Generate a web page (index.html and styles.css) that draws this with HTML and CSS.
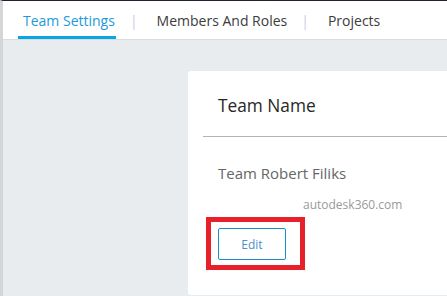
FILE: index.html
```html
<!DOCTYPE html>
<html lang="en">

<head>
    <meta charset="UTF-8">
    <meta name="viewport" content="width=device-width, initial-scale=1.0">
    <title>Team Settings</title>
    <link rel="stylesheet" href="styles.css">
</head>

<body>
    <div class="page">
        <!-- Tab bar -->
        <nav class="tabs">
            <a href="#" class="tab active">Team Settings</a>
            <span class="tab-sep">|</span>
            <a href="#" class="tab">Members And Roles</a>
            <span class="tab-sep">|</span>
            <a href="#" class="tab">Projects</a>
        </nav>

        <main class="content">
            <section class="card">
                <div class="card-head">
                    <h2 class="card-title">Team Name</h2>
                </div>
                <div class="card-body">
                    <p class="team-name">Team Robert Filiks</p>
                    <p class="watermark">autodesk360.com</p>
                    <div class="highlight">
                        <button class="btn-edit">Edit</button>
                    </div>
                </div>
            </section>
        </main>
    </div>
</body>

</html>
```

FILE: styles.css
```css
/* Base page */
body {
    margin: 0;
    padding: 0;
    font-family: "Open Sans", "Noto Sans", sans-serif;
    background: #e8ecef;
    overflow: hidden;
}

.page {
    height: 296px;
    border-left: 3px solid #d4d6d8;
    box-sizing: border-box;
    border-top: 1px solid #1f2330;
}

/* Tab bar */
.tabs {
    display: flex;
    align-items: flex-end;
    height: 38px;
    padding-left: 15px;
    background: #fff;
    border-bottom: 1px solid #d9dde1;
}

.tab {
    display: block;
    padding: 0 0 5px 5px;
    font-size: 14px;
    line-height: 20px;
    color: #3c3c3c;
    text-decoration: none;
    border-bottom: 3px solid transparent;
}

.tab.active {
    padding-right: 1px;
    color: #1c9ad8;
    border-bottom-color: #0aa5e2;
}

.tab-sep {
    padding: 0 14px 8px 14px;
    font-size: 14px;
    line-height: 20px;
    color: #cbcbe0;
}

/* Content */
.content {
    padding: 31px 0 0 185px;
}

.card {
    background: #fff;
    border-radius: 3px 0 0 3px;
    height: 224px;
    padding-left: 15px;
}

.card-head {
    border-bottom: 1px solid #b5b5b5;
    padding: 23px 0 18px 15px;
}

.card-title {
    margin: 0;
    font-size: 17.3px;
    font-weight: normal;
    line-height: 24px;
    color: #262626;
}

.card-body {
    padding: 26px 0 0 15px;
}

.team-name {
    margin: 0;
    font-size: 15px;
    line-height: 20px;
    color: #666;
}

.watermark {
    margin: 14px 0 0 85px;
    font-size: 12px;
    line-height: 16px;
    color: #9a9a9a;
}

/* Red annotation box round the button */
.highlight {
    display: inline-block;
    margin: 4px 0 0 -12px;
    padding: 6px 14px 5px 7px;
    border: 5px solid #e8202a;
}

.btn-edit {
    display: block;
    width: 68px;
    height: 32px;
    padding: 0;
    background: #fff;
    border: 1px solid #1a8fc7;
    border-radius: 2px;
    font-family: inherit;
    font-size: 12px;
    color: #4a8fcc;
    cursor: pointer;
}
```
